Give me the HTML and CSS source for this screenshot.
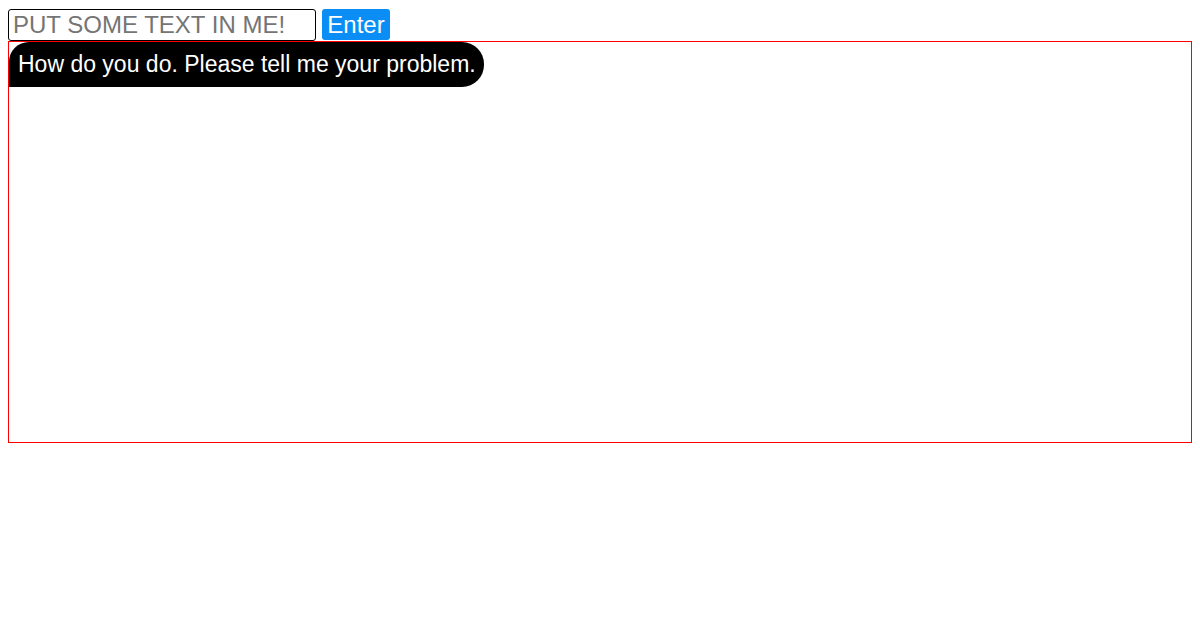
FILE: index.html
```html
<!DOCTYPE html>
<html>
<head>
<meta charset="utf-8">
<link rel="stylesheet" href="styles.css">
</head>
<body>
<div class="bar">
  <input class="field" type="text" placeholder="PUT SOME TEXT IN ME!">
  <button class="enter">Enter</button>
</div>
<div class="log">
  <div class="bubble">How do you do. Please tell me your problem.</div>
</div>
</body>
</html>
```

FILE: styles.css
```css
body {
  margin: 8px;
  font-family: "Liberation Sans", Arial, sans-serif;
  background: #fff;
}
.bar {
  display: flex;
  align-items: flex-start;
  gap: 6px;
  padding-top: 1px;
}
.field {
  box-sizing: border-box;
  width: 308px;
  height: 32px;
  border: 1px solid #000;
  border-radius: 3px;
  padding: 0 4px;
  font-family: "Liberation Sans", Arial, sans-serif;
  font-size: 24px;
  color: #000;
  margin: 0;
}
.field::placeholder {
  color: #757575;
}
.enter {
  box-sizing: border-box;
  height: 31px;
  width: 68px;
  border: none;
  border-radius: 3px;
  background: #0a8ef5;
  color: #fff;
  font-family: "Liberation Sans", Arial, sans-serif;
  font-size: 24px;
  padding: 0;
  margin: 0;
}
.log {
  box-sizing: border-box;
  height: 402px;
  border: 1px solid #f00;
  display: flex;
  flex-direction: column;
  align-items: flex-start;
}
.bubble {
  background: #000;
  color: #fff;
  font-size: 23px;
  line-height: 27px;
  padding: 9px 8px 9px 9px;
  border-radius: 20px 22px 22px 0;
}
```
